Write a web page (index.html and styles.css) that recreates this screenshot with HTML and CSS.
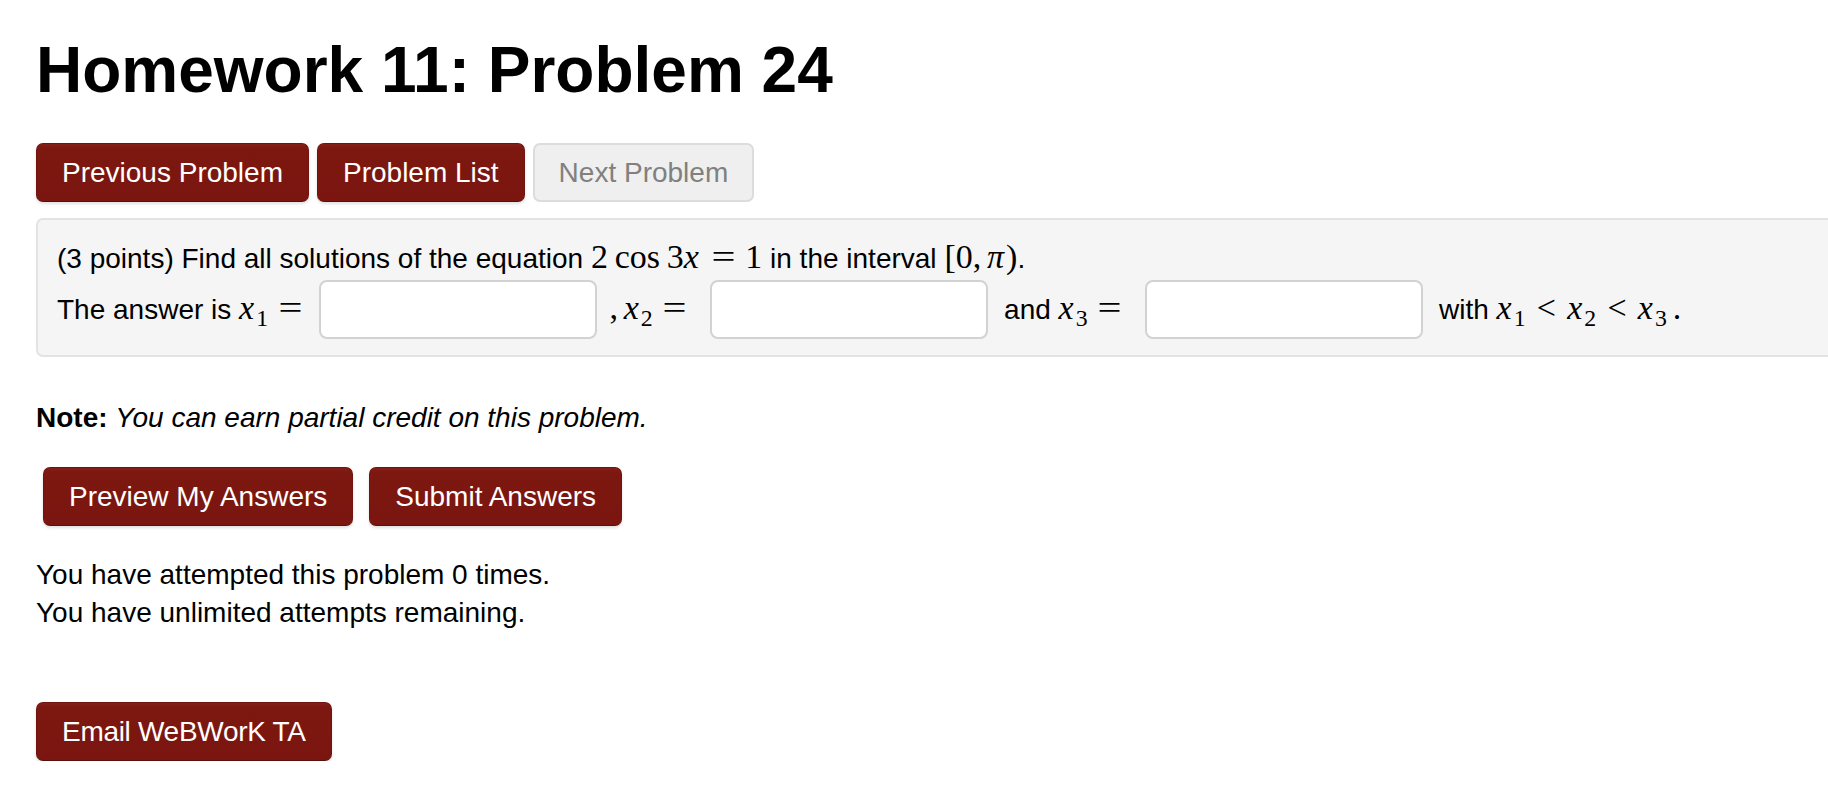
FILE: index.html
```html
<!DOCTYPE html>
<html lang="en">
<head>
<meta charset="utf-8">
<title>Homework 11: Problem 24</title>
<link rel="stylesheet" href="styles.css">
</head>
<body>
<main class="page">
  <h1 class="title">Homework 11: Problem 24</h1>

  <nav class="nav-buttons">
    <button class="btn btn-primary">Previous Problem</button>
    <button class="btn btn-primary">Problem List</button>
    <button class="btn btn-disabled">Next Problem</button>
  </nav>

  <div class="well">
    <div class="line">(3 points) Find all solutions of the equation <span class="math">2<span class="op">cos</span>3<i class="v">x</i><span class="eq">=</span>1</span> in the interval <span class="math">[0,<span class="thin"></span><i class="v">π</i>)</span>.</div>
    <div class="line answers">
      <span class="txt">The answer is <span class="math"><i class="v">x</i><sub>1</sub><span class="eq">=</span></span></span>
      <input class="ans ans-first" type="text">
      <span class="txt"><span class="math">,<span class="thin"></span><i class="v">x</i><sub>2</sub><span class="eq">=</span></span></span>
      <input class="ans" type="text">
      <span class="txt lead">and <span class="math"><i class="v">x</i><sub>3</sub><span class="eq">=</span></span></span>
      <input class="ans" type="text">
      <span class="txt lead">with <span class="math"><i class="v">x</i><sub>1</sub><span class="rel">&lt;</span><i class="v">x</i><sub>2</sub><span class="rel">&lt;</span><i class="v">x</i><sub>3</sub><span class="thin"></span>.</span></span>
    </div>
  </div>

  <p class="note"><b>Note:</b> <i>You can earn partial credit on this problem.</i></p>

  <div class="submit-row">
    <button class="btn btn-primary">Preview My Answers</button>
    <button class="btn btn-primary">Submit Answers</button>
  </div>

  <p class="attempts">You have attempted this problem 0 times.<br>You have unlimited attempts remaining.</p>

  <div class="email-row">
    <button class="btn btn-primary btn-email">Email WeBWorK TA</button>
  </div>
</main>
</body>
</html>
```

FILE: styles.css
```css
html, body {
  margin: 0;
  padding: 0;
  background: #ffffff;
  overflow: hidden;
}

body {
  font-family: "Liberation Sans", Arial, Helvetica, sans-serif;
  font-size: 28px;
  line-height: 40px;
  color: #000000;
}

.page {
  padding: 30px 0 0 36px;
}

.title {
  margin: 0;
  font-size: 64px;
  line-height: 80px;
  font-weight: bold;
}

.nav-buttons {
  display: flex;
  gap: 8px;
  margin-top: 33px;
}

.btn {
  font-family: "Liberation Sans", Arial, Helvetica, sans-serif;
  font-size: 28px;
  line-height: 40px;
  padding: 9px 25px 8px;
  border: 1px solid #6b120c;
  border-radius: 7px;
  cursor: pointer;
  white-space: nowrap;
}

.btn-primary {
  color: #ffffff;
  background: linear-gradient(#84201a 0, #7c1810 4px, #7a160f 100%);
  border-color: #701410 #701410 #5c0f0a;
  box-shadow: 0 2px 3px rgba(0, 0, 0, 0.12);
}

.btn-disabled {
  color: #808080;
  background: #efefef;
  border: 2px solid #dcdcdc;
  padding: 8px 24px 7px;
}

.btn-email {
  letter-spacing: -0.3px;
}

.well {
  margin: 16px -20px 0 0;
  padding: 17px 19px 16px;
  background: #f5f5f5;
  border: 2px solid #e3e3e3;
  border-right: none;
  border-radius: 7px 0 0 7px;
}

.line {
  white-space: nowrap;
}

.answers {
  display: flex;
  align-items: center;
  height: 60px;
}

.txt {
  white-space: pre;
}

.txt.lead {
  padding-left: 4px;
}

.ans {
  box-sizing: border-box;
  width: 278px;
  height: 59px;
  margin: 0 12px 0 13px;
  padding: 0 12px;
  background: #ffffff;
  border: 2px solid #d2d2d2;
  border-radius: 8px;
  font-size: 28px;
  font-family: "Liberation Sans", Arial, sans-serif;
}

.ans-first {
  margin-left: 7px;
}

.math {
  font-family: "Liberation Serif", "Times New Roman", serif;
  font-size: 34px;
  white-space: nowrap;
}

.math .v {
  font-style: italic;
  margin-right: 0.06em;
}

.math .op {
  margin: 0 0.2em;
}

.math .eq {
  display: inline-block;
  margin: 0 0.37em;
  transform: scaleX(1.25);
}

.math .rel {
  margin: 0 0.33em;
}

.math .thin {
  display: inline-block;
  width: 0.17em;
}

.math sub {
  font-size: 0.7em;
  line-height: 0;
  vertical-align: -0.28em;
}

.note {
  margin: 41px 0 0;
}

.submit-row {
  display: flex;
  gap: 16px;
  margin: 29px 0 0 7px;
}

.attempts {
  margin: 30px 0 0;
  line-height: 38px;
}

.email-row {
  margin-top: 70px;
}
```
